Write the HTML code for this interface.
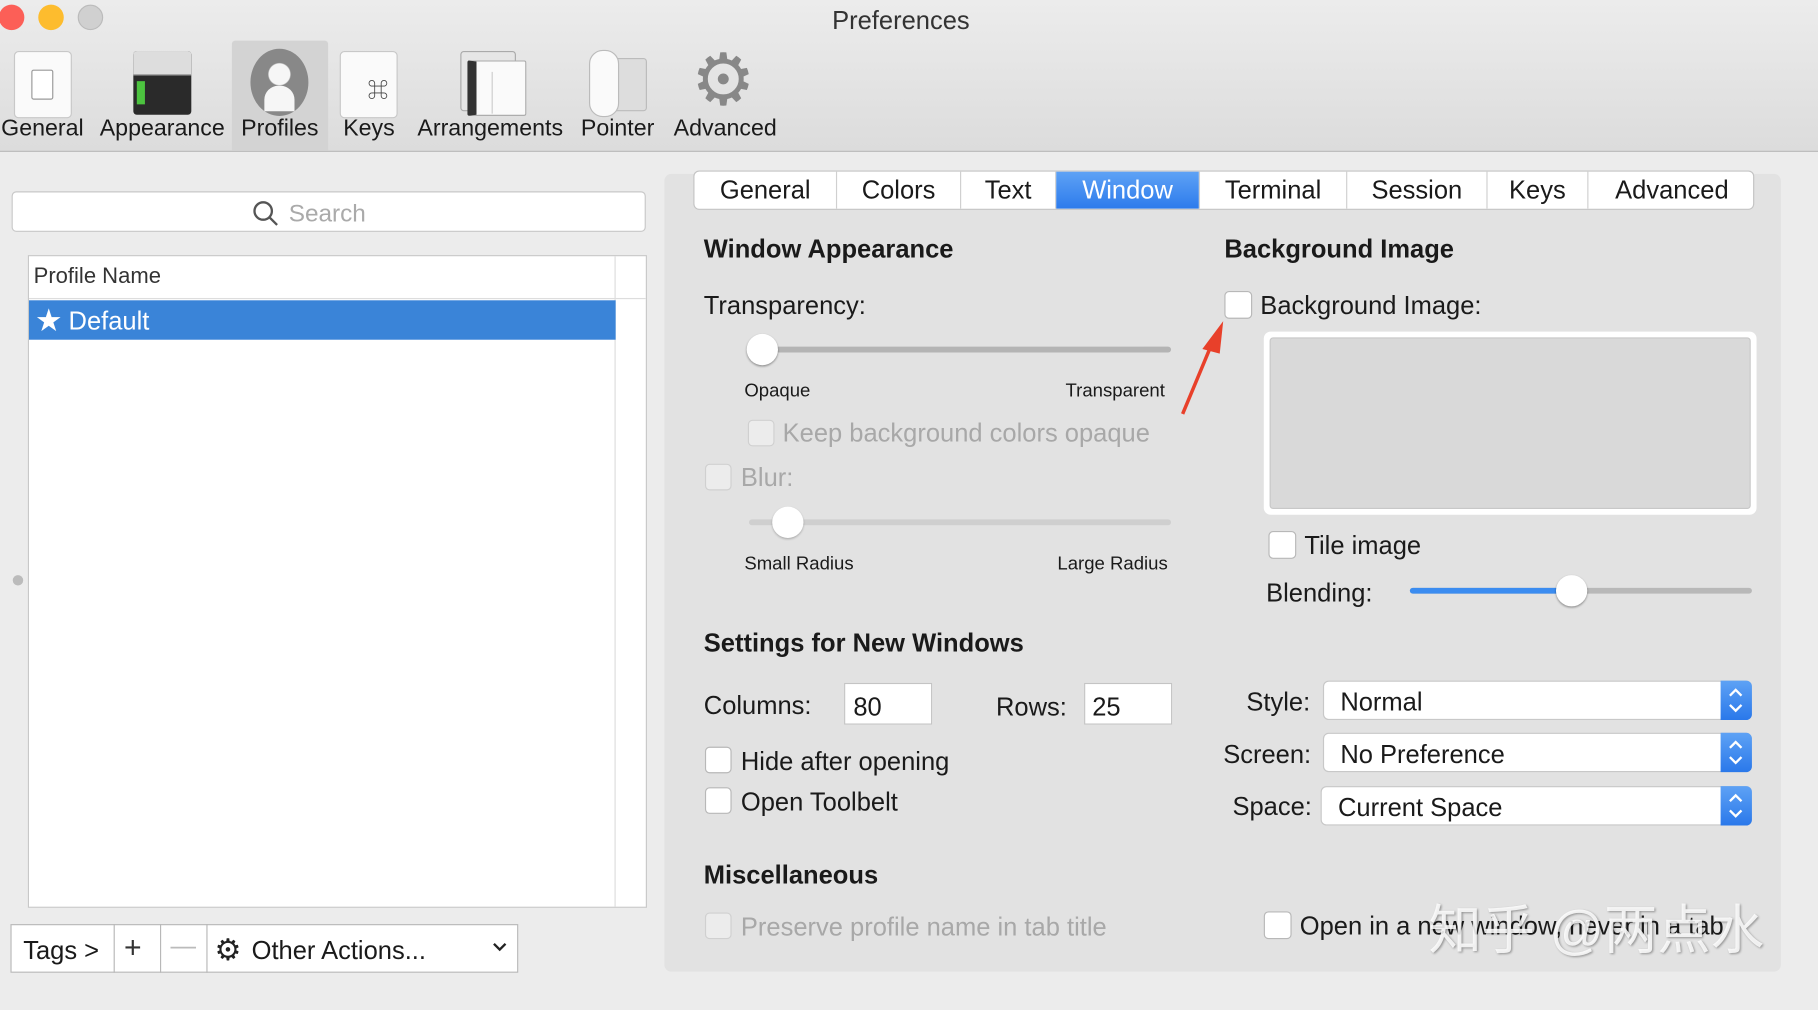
<!DOCTYPE html>
<html><head><meta charset="utf-8"><style>
html,body{margin:0;padding:0;width:1818px;height:1010px;overflow:hidden;background:#ececec}
#w{position:absolute;left:0;top:0;width:1568px;height:871px;transform:scale(1.15944);transform-origin:0 0;font-family:"Liberation Sans","Noto Sans CJK SC",sans-serif;color:#1a1a1a}
.a{position:absolute;white-space:nowrap;line-height:1}
div.a[style*="font-size"]{margin-top:1px}
.cb{position:absolute;width:21px;height:21px;background:#fff;border:1px solid #b8b8b8;border-radius:4px;box-sizing:border-box}
.dis .cb,.cb.dis{background:#ececec;border-color:#d0d0d0}
.sel{position:absolute;height:34px;background:#fff;border:1px solid #c8c8c8;border-radius:5px;box-sizing:border-box}
.sel .ar{position:absolute;right:-1px;top:-1px;width:27px;height:34px;background:linear-gradient(#5ea2f5,#2a78ea);border-radius:0 5px 5px 0}
.tab{position:absolute;top:0;height:32px;line-height:32px;text-align:center;font-size:22px;border-right:1px solid #d0d0d0;box-sizing:border-box}
</style></head><body><div id="w">
<div class="a" style="left:0;top:0;width:1568px;height:130px;background:linear-gradient(#ececec,#dcdcdc);border-bottom:1px solid #b8b8b8"></div>
<div class="a" style="left:-1px;top:4px;width:22px;height:22px;border-radius:50%;background:#fc5f57"></div>
<div class="a" style="left:33px;top:4px;width:22px;height:22px;border-radius:50%;background:#fdbc2e"></div>
<div class="a" style="left:67px;top:4px;width:22px;height:22px;border-radius:50%;background:#d0d0d0;border:1px solid #bbb;box-sizing:border-box"></div>
<div class="a" style="left:0;width:1554px;top:6px;text-align:center;font-size:22px;color:#333">Preferences</div>
<div class="a" style="left:200px;top:35px;width:83px;height:95px;background:#d3d3d3;border-radius:3px 3px 0 0"></div>
<div class="a" style="left:12px;top:44px;width:48px;height:56px;background:#fafafa;border:1px solid #c8c8c8;border-radius:4px"></div>
<div class="a" style="left:27px;top:60px;width:17px;height:24px;background:#fff;border:1px solid #999;border-radius:2px"></div>
<div class="a" style="left:115px;top:44px;width:50px;height:55px;background:#2a2a2a;border-radius:3px;overflow:hidden"><div style="height:20px;background:#ddd;border-bottom:1px solid #999"></div><div style="position:absolute;left:3px;top:26px;width:7px;height:20px;background:#4cc33f"></div></div>
<div class="a" style="left:216px;top:42px;width:50px;height:58px;border-radius:50%;background:radial-gradient(circle at 50% 38%,#f6f6f6 0 9px,#888 10px)"></div>
<div class="a" style="left:228px;top:74px;width:26px;height:22px;background:#f6f6f6;border-radius:12px 12px 0 0"></div>
<div class="a" style="left:293px;top:44px;width:48px;height:56px;background:#fafafa;border:1px solid #c8c8c8;border-radius:4px"></div>
<div class="a" style="left:317px;top:68px;font-size:18px;color:#444">⌘</div>
<div class="a" style="left:397px;top:44px;width:46px;height:50px;background:#e6e6e6;border:1px solid #aaa;border-radius:3px"></div>
<div class="a" style="left:403px;top:52px;width:42px;height:46px;background:#fafafa;border:1px solid #aaa;border-left:8px solid #333;border-radius:2px"></div>
<div class="a" style="left:424px;top:62px;width:1px;height:36px;background:#ccc"></div>
<div class="a" style="left:528px;top:50px;width:28px;height:44px;background:#ddd;border:1px solid #bbb;border-radius:3px"></div>
<div class="a" style="left:508px;top:43px;width:24px;height:56px;background:#fafafa;border:1px solid #bbb;border-radius:12px"></div>
<div class="a" style="left:596px;top:38px;font-size:62px;color:#888;line-height:1">⚙</div>
<div class="a" style="left:1px;top:100px;font-size:20px">General</div>
<div class="a" style="left:86px;top:100px;font-size:20px">Appearance</div>
<div class="a" style="left:208px;top:100px;font-size:20px">Profiles</div>
<div class="a" style="left:296px;top:100px;font-size:20px">Keys</div>
<div class="a" style="left:360px;top:100px;font-size:20px">Arrangements</div>
<div class="a" style="left:501px;top:100px;font-size:20px">Pointer</div>
<div class="a" style="left:581px;top:100px;font-size:20px">Advanced</div>
<div class="a" style="left:10px;top:165px;width:547px;height:35px;background:#fff;border:1px solid #c8c8c8;border-radius:4px;box-sizing:border-box"></div>
<svg class="a" style="left:217px;top:172px" width="24" height="24" viewBox="0 0 24 24"><circle cx="10" cy="10" r="7.5" fill="none" stroke="#555" stroke-width="2"/><path d="M15.5 15.5L22 22" stroke="#555" stroke-width="2"/></svg>
<div class="a" style="left:249px;top:173px;font-size:21px;color:#aaa">Search</div>
<div class="a" style="left:24px;top:220px;width:534px;height:563px;background:#fff;border:1px solid #c8c8c8;box-sizing:border-box"></div>
<div class="a" style="left:25px;top:257px;width:532px;height:1px;background:#ddd"></div>
<div class="a" style="left:530px;top:221px;width:1px;height:561px;background:#ddd"></div>
<div class="a" style="left:29px;top:228px;font-size:19px;color:#333">Profile Name</div>
<div class="a" style="left:25px;top:259px;width:506px;height:34px;background:#3a84d8"></div>
<div class="a" style="left:31px;top:265px;font-size:22px;color:#fff">★ Default</div>
<div class="a" style="left:11px;top:496px;width:9px;height:9px;border-radius:50%;background:#bbb"></div>
<div class="a" style="left:9px;top:797px;width:438px;height:42px;background:#fff;border:1px solid #b8b8b8;box-sizing:border-box"></div>
<div class="a" style="left:98px;top:797px;width:1px;height:42px;background:#b8b8b8"></div>
<div class="a" style="left:138px;top:797px;width:1px;height:42px;background:#b8b8b8"></div>
<div class="a" style="left:178px;top:797px;width:1px;height:42px;background:#b8b8b8"></div>
<div class="a" style="left:20px;top:808px;font-size:22px">Tags &gt;</div>
<div class="a" style="left:107px;top:803px;font-size:26px;color:#333">+</div>
<div class="a" style="left:147px;top:804px;font-size:22px;color:#bbb">—</div>
<div class="a" style="left:185px;top:805px;font-size:26px;color:#222">⚙</div>
<div class="a" style="left:217px;top:808px;font-size:22px">Other Actions...</div>
<svg class="a" style="left:424px;top:812px" width="14" height="10"><path d="M2 2L7 7L12 2" fill="none" stroke="#222" stroke-width="2"/></svg>
<div class="a" style="left:573px;top:150px;width:963px;height:688px;background:#e2e2e2;border-radius:6px"></div>
<div class="a" style="left:598px;top:147px;width:915px;height:34px;background:#fff;border:1px solid #c4c4c4;border-radius:5px;box-sizing:border-box;overflow:hidden">
<div class="tab" style="left:0;width:123px">General</div>
<div class="tab" style="left:123px;width:107px">Colors</div>
<div class="tab" style="left:230px;width:82px">Text</div>
<div class="tab" style="left:312px;width:124px;background:linear-gradient(#5ea2f5,#2d7bec);color:#fff">Window</div>
<div class="tab" style="left:436px;width:127px">Terminal</div>
<div class="tab" style="left:563px;width:121px">Session</div>
<div class="tab" style="left:684px;width:87px">Keys</div>
<div class="tab" style="left:771px;width:144px;border:0">Advanced</div>
</div>
<div class="a" style="left:607px;top:203px;font-size:22px;font-weight:bold">Window Appearance</div>
<div class="a" style="left:607px;top:252px;font-size:22px">Transparency:</div>
<div class="a" style="left:646px;top:299px;width:364px;height:5px;background:#b4b4b4;border-radius:3px"></div>
<div class="a" style="left:644px;top:288px;width:27px;height:27px;border-radius:50%;background:#fff;box-shadow:0 1px 2px rgba(0,0,0,.4)"></div>
<div class="a" style="left:642px;top:329px;font-size:16px">Opaque</div>
<div class="a" style="left:919px;top:329px;font-size:16px">Transparent</div>
<div class="cb dis" style="left:645px;top:362px;width:23px;height:23px"></div>
<div class="a" style="left:675px;top:362px;font-size:22px;color:#a8a8a8">Keep background colors opaque</div>
<div class="cb dis" style="left:608px;top:400px;width:23px;height:23px"></div>
<div class="a" style="left:639px;top:400px;font-size:22px;color:#a8a8a8">Blur:</div>
<div class="a" style="left:646px;top:448px;width:364px;height:5px;background:#cfcfcf;border-radius:3px"></div>
<div class="a" style="left:666px;top:437px;width:27px;height:27px;border-radius:50%;background:#fff;box-shadow:0 1px 2px rgba(0,0,0,.25)"></div>
<div class="a" style="left:642px;top:478px;font-size:16px">Small Radius</div>
<div class="a" style="left:912px;top:478px;font-size:16px">Large Radius</div>
<div class="a" style="left:607px;top:543px;font-size:22px;font-weight:bold">Settings for New Windows</div>
<div class="a" style="left:607px;top:597px;font-size:22px">Columns:</div>
<div class="a" style="left:728px;top:589px;width:76px;height:36px;background:#fff;border:1px solid #c4c4c4;box-sizing:border-box"></div>
<div class="a" style="left:736px;top:598px;font-size:22px">80</div>
<div class="a" style="left:859px;top:598px;font-size:22px">Rows:</div>
<div class="a" style="left:935px;top:589px;width:76px;height:36px;background:#fff;border:1px solid #c4c4c4;box-sizing:border-box"></div>
<div class="a" style="left:942px;top:598px;font-size:22px">25</div>
<div class="cb" style="left:608px;top:644px;width:23px;height:23px"></div>
<div class="a" style="left:639px;top:645px;font-size:22px">Hide after opening</div>
<div class="cb" style="left:608px;top:679px;width:23px;height:23px"></div>
<div class="a" style="left:639px;top:680px;font-size:22px">Open Toolbelt</div>
<div class="a" style="left:607px;top:743px;font-size:22px;font-weight:bold">Miscellaneous</div>
<div class="cb dis" style="left:608px;top:787px;width:23px;height:23px"></div>
<div class="a" style="left:639px;top:788px;font-size:22px;color:#a8a8a8">Preserve profile name in tab title</div>
<div class="a" style="left:1056px;top:203px;font-size:22px;font-weight:bold">Background Image</div>
<div class="cb" style="left:1056px;top:251px;width:24px;height:24px"></div>
<div class="a" style="left:1087px;top:252px;font-size:22px">Background Image:</div>
<svg class="a" style="left:1015px;top:275px" width="45" height="85"><path d="M5 82L30 22" stroke="#e8402a" stroke-width="3"/><path d="M40 2L22 26L37 30Z" fill="#e8402a"/></svg>
<div class="a" style="left:1090px;top:286px;width:425px;height:158px;background:#fff;border-radius:6px"></div>
<div class="a" style="left:1095px;top:291px;width:415px;height:148px;background:#d9d9d9;border:1px solid #c8c8c8;border-radius:3px;box-sizing:border-box"></div>
<div class="cb" style="left:1094px;top:458px;width:24px;height:24px"></div>
<div class="a" style="left:1125px;top:459px;font-size:22px">Tile image</div>
<div class="a" style="left:1092px;top:500px;font-size:22px">Blending:</div>
<div class="a" style="left:1216px;top:507px;width:295px;height:5px;background:#b8b8b8;border-radius:3px"></div>
<div class="a" style="left:1216px;top:507px;width:140px;height:5px;background:#3b8cf0;border-radius:3px"></div>
<div class="a" style="left:1342px;top:496px;width:27px;height:27px;border-radius:50%;background:#fff;box-shadow:0 1px 2px rgba(0,0,0,.4)"></div>
<div class="a" style="left:1075px;top:594px;font-size:22px">Style:</div>
<div class="sel" style="left:1141px;top:587px;width:370px"><div class="ar"></div></div>
<div class="a" style="left:1156px;top:594px;font-size:22px">Normal</div>
<div class="a" style="left:1055px;top:639px;font-size:22px">Screen:</div>
<div class="sel" style="left:1141px;top:632px;width:370px"><div class="ar"></div></div>
<div class="a" style="left:1156px;top:639px;font-size:22px">No Preference</div>
<div class="a" style="left:1063px;top:684px;font-size:22px">Space:</div>
<div class="sel" style="left:1139px;top:678px;width:372px"><div class="ar"></div></div>
<div class="a" style="left:1154px;top:685px;font-size:22px">Current Space</div>
<svg class="a" style="left:1489px;top:590px" width="16" height="28"><path d="M3 10L8 5L13 10M3 18L8 23L13 18" fill="none" stroke="#fff" stroke-width="2"/></svg>
<svg class="a" style="left:1489px;top:635px" width="16" height="28"><path d="M3 10L8 5L13 10M3 18L8 23L13 18" fill="none" stroke="#fff" stroke-width="2"/></svg>
<svg class="a" style="left:1489px;top:681px" width="16" height="28"><path d="M3 10L8 5L13 10M3 18L8 23L13 18" fill="none" stroke="#fff" stroke-width="2"/></svg>
<div class="cb" style="left:1090px;top:786px;width:24px;height:24px"></div>
<div class="a" style="left:1121px;top:787px;font-size:22px">Open in a new window, never in a tab</div>
<div class="a" style="left:1232px;top:778px;font-size:46px;color:rgba(255,255,255,.85);text-shadow:1px 1px 2px rgba(0,0,0,.35)">知乎 @两点水</div>
</div></body></html>
